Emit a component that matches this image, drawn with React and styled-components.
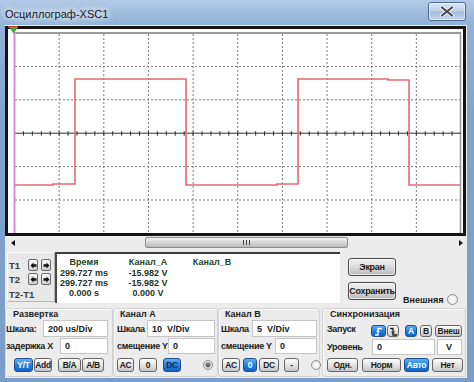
import React from 'react';
import styled, { createGlobalStyle } from 'styled-components';

const font = `'Liberation Sans', Arial, sans-serif`;

const GlobalStyle = createGlobalStyle`
  html, body { margin: 0; padding: 0; }
  body { width: 474px; height: 382px; overflow: hidden; font-family: ${font}; }
`;

const Window = styled.div`
  width: 474px;
  height: 382px;
  box-sizing: border-box;
  display: flex;
  flex-direction: column;
  background: linear-gradient(180deg, #b2cae6 0px, #93b3d9 22px, #7fa3cd 120px, #7a9ec9 100%);
`;

const TitleBar = styled.div`
  height: 25px;
  flex: none;
  display: flex;
  align-items: center;
  justify-content: space-between;
  padding: 0 8px 0 5px;
`;

const Title = styled.span`
  font: 11px ${font};
  color: #161616;
  margin-top: 2px;
  text-shadow: 0 0 5px #eef4fc, 0 0 9px #eef4fc, 0 0 12px #eef4fc;
`;

const CloseButton = styled.div`
  width: 38px;
  height: 19px;
  box-sizing: border-box;
  align-self: flex-start;
  margin-top: 2px;
  border: 1px solid #4f6d96;
  border-radius: 3px;
  background: linear-gradient(#dde7f3, #bdd0e7 45%, #a5bedd 52%, #c3d5ec);
  box-shadow: inset 0 0 0 1px rgba(255, 255, 255, 0.5);
  display: flex;
  align-items: center;
  justify-content: center;
`;

const Body = styled.div`
  flex: 1;
  margin: 0 7px 4px 5px;
  background: #ececec;
  display: flex;
  flex-direction: column;
  min-height: 0;
`;

const Scope = styled.div`
  position: relative;
  box-sizing: border-box;
  height: 210px;
  margin: 1px 1px 0 0;
  border: 3px solid #141414;
  background: #fff;
  padding: 3px 2px 0 6px;
  flex: none;
`;

const Marker = styled.svg`
  position: absolute;
  left: 0;
  top: -3px;
`;

const ScrollBar = styled.div`
  height: 11px;
  margin: 1px 1px 0 3px;
  display: flex;
  align-items: center;
  flex: none;
`;

const ScrollArrow = styled.div`
  width: ${p => p.$w}px;
  height: 11px;
  display: flex;
  align-items: center;
  justify-content: center;
`;

const Track = styled.div`
  flex: 1;
  height: 11px;
  display: flex;
  align-items: center;
`;

const Thumb = styled.div`
  box-sizing: border-box;
  height: 11px;
  border: 1px solid #8d8d8d;
  border-radius: 2px;
  background: linear-gradient(#f2f2f2, #d6d6d6 50%, #b9b9b9);
  display: flex;
  align-items: center;
  justify-content: center;
`;

const Readout = styled.div`
  height: 52px;
  margin-top: 3px;
  padding-left: 2px;
  display: flex;
  flex: none;
`;

const CursorPanel = styled.div`
  box-sizing: border-box;
  width: 48px;
  height: 50px;
  margin-top: 1px;
  padding: 6px 0 0 1px;
  background: #e8e8e8;
  border: 1px solid;
  border-color: #fdfdfd #b5b5b5 #b5b5b5 #fdfdfd;
  display: flex;
  flex-direction: column;
  gap: 2px;
`;

const CursorRow = styled.div`
  height: 12px;
  display: flex;
  align-items: center;
  margin-top: ${p => p.$mt || 0}px;
`;

const CursorLabel = styled.span`
  width: ${p => p.$w || 19}px;
  font: bold 9.5px ${font};
  color: #3a3a3a;
`;

const ArrowButton = styled.div`
  box-sizing: border-box;
  width: 10px;
  height: 12px;
  margin-right: 3px;
  border: 1px solid #6a6a6a;
  border-radius: 2px;
  background: linear-gradient(#fafafa, #cfcfcf);
  display: flex;
  align-items: center;
  justify-content: center;
`;

const ReadoutBox = styled.div`
  box-sizing: border-box;
  width: 285px;
  margin-top: 1px;
  padding-top: 1px;
  background: #fff;
  border-top: 2px solid #3d3d3d;
  border-left: 2px solid #4a4a4a;
  display: grid;
  grid-template-columns: 54px 74px 54px;
  grid-template-rows: 13px 10px 10px 10px;
  align-items: center;
  justify-items: center;
`;

const Cell = styled.span`
  font: bold 9px ${font};
  color: ${p => (p.$head ? '#24462b' : '#1f3324')};
  white-space: nowrap;
`;

const SideButtons = styled.div`
  margin-left: 8px;
  padding-top: 7px;
  display: flex;
  flex-direction: column;
  gap: 6px;
`;

const BigButton = styled.div`
  box-sizing: border-box;
  width: 48px;
  height: 18px;
  border: 1px solid #4c4c4c;
  border-radius: 3px;
  background: linear-gradient(#f4f4f4, #dcdcdc 45%, #bcbcbc);
  box-shadow: inset 0 0 0 1px rgba(255, 255, 255, 0.6);
  font: bold 9px ${font};
  letter-spacing: -0.3px;
  color: #1a1a1a;
  display: flex;
  align-items: center;
  justify-content: center;
  white-space: nowrap;
`;

const ExternalRow = styled.div`
  align-self: flex-end;
  margin: 0 0 -2px 7px;
  display: flex;
  align-items: center;
  gap: 4px;
  font: bold 9px ${font};
  color: #1a1a1a;
`;

const Radio = styled.span`
  box-sizing: border-box;
  width: ${p => p.$size || 10}px;
  height: ${p => p.$size || 10}px;
  border-radius: 50%;
  border: 1px solid #8e8e8e;
  flex: none;
  background: ${p =>
    p.$on
      ? 'radial-gradient(circle, #6e6e6e 0 2px, #bcbcbc 2.6px, #f4f4f4 4px)'
      : 'radial-gradient(circle, #fdfdfd 0, #e2e2e2 100%)'};
`;

const Controls = styled.div`
  flex: 1;
  display: flex;
  padding: 5px 1px 1px 0;
  min-height: 0;
`;

const Group = styled.div`
  box-sizing: border-box;
  width: ${p => p.$w}px;
  margin-left: ${p => p.$ml || 0}px;
  padding-right: ${p => p.$pr}px;
  border: 1px solid #d3d3d3;
  border-radius: 3px;
  box-shadow: inset 1px 1px 0 #fafafa;
  display: flex;
  flex-direction: column;
`;

const GroupTitle = styled.div`
  height: 11px;
  line-height: 11px;
  padding-left: ${p => p.$pl}px;
  font: bold 9px ${font};
  color: #1c1c1c;
`;

const Row = styled.div`
  height: ${p => p.$h}px;
  margin-top: ${p => p.$mt || 0}px;
  padding-left: ${p => p.$pl}px;
  display: flex;
  align-items: center;
`;

const Label = styled.span`
  font: bold 9px ${font};
  letter-spacing: -0.3px;
  color: #1a1a1a;
  white-space: nowrap;
  margin-right: auto;
`;

const Field = styled.div`
  box-sizing: border-box;
  width: ${p => p.$w}px;
  height: 100%;
  margin-left: ${p => p.$ml || 0}px;
  padding-left: ${p => p.$pl || 4}px;
  background: #fff;
  border: 1px solid #c6c6c6;
  font: bold 9px ${font};
  color: #1a1a1a;
  display: flex;
  align-items: center;
  white-space: pre;
`;

const Button = styled.div`
  box-sizing: border-box;
  flex: none;
  width: ${p => p.$w}px;
  height: ${p => p.$h || 14}px;
  margin-left: ${p => p.$ml || 0}px;
  border: 1px solid ${p => (p.$on ? '#1f4f8c' : '#666')};
  border-radius: 3px;
  background: ${p =>
    p.$on
      ? 'linear-gradient(#5fb0f5, #2581e0 50%, #1562c2)'
      : 'linear-gradient(#fdfdfd, #e4e4e4 50%, #c6c6c6)'};
  color: ${p => (p.$on ? (p.$dark ? '#0d2b66' : '#fff') : '#1e1e1e')};
  font: bold 8.5px ${font};
  letter-spacing: -0.3px;
  display: flex;
  align-items: center;
  justify-content: center;
  white-space: nowrap;
`;

const ButtonRow = styled.div`
  height: ${p => p.$h || 14}px;
  margin-top: ${p => p.$mt || 0}px;
  padding-left: ${p => p.$pl}px;
  display: flex;
  align-items: center;
`;

const GRID_W = 447;
const GRID_H = 201;
const DIV_X = 44.65;
const DIV_Y = 33.4;

function ScopeGrid() {
  const verticals = Array.from({ length: 9 }, (_, i) => 0.5 + (i + 1) * DIV_X);
  const horizontals = [1, 2, 4, 5].map(j => 1 + j * DIV_Y);
  const axisY = 1 + 3 * DIV_Y;
  const ticks = Array.from({ length: 49 }, (_, k) => 0.5 + (k + 1) * (DIV_X / 5));
  return (
    <svg width={GRID_W} height={GRID_H} style={{ display: 'block', overflow: 'visible' }}>
      {verticals.map(x => (
        <line key={x} x1={x} y1={2} x2={x} y2={GRID_H} stroke="#7b7b7b" strokeWidth="1" strokeDasharray="2 2" />
      ))}
      {horizontals.map(y => (
        <line key={y} x1={1} y1={y} x2={GRID_W} y2={y} stroke="#7b7b7b" strokeWidth="1" strokeDasharray="2 2" />
      ))}
      <line x1={0} y1={1} x2={GRID_W} y2={1} stroke="#9a9a9a" strokeWidth="2" />
      <line x1={GRID_W - 0.5} y1={0} x2={GRID_W - 0.5} y2={GRID_H} stroke="#9a9a9a" strokeWidth="1.5" />
      <line x1={0} y1={axisY} x2={GRID_W} y2={axisY} stroke="#2e2e2e" strokeWidth="1" />
      {ticks.map(x => (
        <line key={x} x1={x} y1={axisY - 2} x2={x} y2={axisY + 2.5} stroke="#2e2e2e" strokeWidth="1" />
      ))}
      <path
        d="M1 153 H39 V152 H61 V47 H172 V153 H263 V152 H284 V47 H374 V48 H395 V153 H446"
        fill="none"
        stroke="#e66874"
        strokeWidth="1.6"
      />
      <line x1={0.5} y1={0} x2={0.5} y2={GRID_H} stroke="#dc84e2" strokeWidth="2" />
    </svg>
  );
}

const LeftArrow = () => (
  <svg width="7" height="7" viewBox="0 0 7 7">
    <path d="M0.5 3.5 L3.5 0.5 V2.3 H6.5 V4.7 H3.5 V6.5 Z" fill="#111" />
  </svg>
);

const RightArrow = () => (
  <svg width="7" height="7" viewBox="0 0 7 7">
    <path d="M6.5 3.5 L3.5 0.5 V2.3 H0.5 V4.7 H3.5 V6.5 Z" fill="#111" />
  </svg>
);

const RiseEdge = ({ color }) => (
  <svg width="9" height="9" viewBox="0 0 9 9">
    <path d="M1 8 H4 V1.5 H8" fill="none" stroke={color} strokeWidth="1.3" />
    <path d="M2.5 5 L4 3 L5.5 5" fill="none" stroke={color} strokeWidth="1" />
  </svg>
);

const FallEdge = ({ color }) => (
  <svg width="9" height="9" viewBox="0 0 9 9">
    <path d="M1 1.5 H4 V8 H8" fill="none" stroke={color} strokeWidth="1.3" />
    <path d="M2.5 4.5 L4 6.5 L5.5 4.5" fill="none" stroke={color} strokeWidth="1" />
  </svg>
);

const readoutRows = [
  ['299.727 ms', '-15.982 V', ''],
  ['299.727 ms', '-15.982 V', ''],
  ['0.000 s', '0.000 V', ''],
];

export default function App() {
  return (
    <>
      <GlobalStyle />
      <Window>
        <TitleBar>
          <Title>Осциллограф-XSC1</Title>
          <CloseButton>
            <svg width="14" height="11" viewBox="0 0 14 11">
              <path d="M2 1.5 L12 9.5 M12 1.5 L2 9.5" stroke="#f4f7fb" strokeWidth="4" strokeLinecap="round" />
              <path d="M2 1.5 L12 9.5 M12 1.5 L2 9.5" stroke="#454b55" strokeWidth="2.2" strokeLinecap="round" />
            </svg>
          </CloseButton>
        </TitleBar>
        <Body>
          <Scope>
            <Marker width="11" height="8" viewBox="0 0 11 8">
              <rect x="0" y="0" width="10" height="1.5" fill="#d23a2a" />
              <path d="M1 1 H10 L5.5 7.5 Z" fill="#43a83c" />
            </Marker>
            <ScopeGrid />
          </Scope>

          <ScrollBar>
            <ScrollArrow $w={10}>
              <svg width="4" height="6" viewBox="0 0 4 6">
                <path d="M0 3 L4 0 V6 Z" fill="#111" />
              </svg>
            </ScrollArrow>
            <Track>
              <Thumb style={{ marginLeft: 127, width: 203 }}>
                <svg width="7" height="5" viewBox="0 0 7 5">
                  <path d="M0.5 0 V5 M3.5 0 V5 M6.5 0 V5" stroke="#444" strokeWidth="1" />
                </svg>
              </Thumb>
            </Track>
            <ScrollArrow $w={11}>
              <svg width="4" height="6" viewBox="0 0 4 6">
                <path d="M4 3 L0 0 V6 Z" fill="#111" />
              </svg>
            </ScrollArrow>
          </ScrollBar>

          <Readout>
            <CursorPanel>
              <CursorRow>
                <CursorLabel>T1</CursorLabel>
                <ArrowButton><LeftArrow /></ArrowButton>
                <ArrowButton><RightArrow /></ArrowButton>
              </CursorRow>
              <CursorRow>
                <CursorLabel>T2</CursorLabel>
                <ArrowButton><LeftArrow /></ArrowButton>
                <ArrowButton><RightArrow /></ArrowButton>
              </CursorRow>
              <CursorRow $mt={1}>
                <CursorLabel $w={40}>T2-T1</CursorLabel>
              </CursorRow>
            </CursorPanel>
            <ReadoutBox>
              <Cell $head>Время</Cell>
              <Cell $head>Канал_A</Cell>
              <Cell $head>Канал_B</Cell>
              {readoutRows.map((row, i) =>
                row.map((v, j) => <Cell key={`${i}-${j}`}>{v}</Cell>)
              )}
            </ReadoutBox>
            <SideButtons>
              <BigButton>Экран</BigButton>
              <BigButton>Сохранить</BigButton>
            </SideButtons>
            <ExternalRow>
              Внешняя
              <Radio $size={11} />
            </ExternalRow>
          </Readout>

          <Controls>
            <Group $w={108} $pr={4}>
              <GroupTitle $pl={7}>Развертка</GroupTitle>
              <Row $h={17} $pl={0}>
                <Label>Шкала:</Label>
                <Field $w={65}>200 us/Div</Field>
              </Row>
              <Row $h={16} $mt={1} $pl={0}>
                <Label>задержка X</Label>
                <Field $w={48}>0</Field>
              </Row>
              <ButtonRow $mt={4} $pl={8}>
                <Button $w={19} $on>Y/T</Button>
                <Button $w={18} $ml={1}>Add</Button>
                <Button $w={23} $ml={6}>B/A</Button>
                <Button $w={22} $ml={1}>A/B</Button>
              </ButtonRow>
            </Group>

            <Group $w={105} $pr={2}>
              <GroupTitle $pl={6}>Канал A</GroupTitle>
              <Row $h={17} $pl={3}>
                <Label>Шкала</Label>
                <Field $w={68}>10  V/Div</Field>
              </Row>
              <Row $h={16} $mt={1} $pl={3}>
                <Label>смещение Y</Label>
                <Field $w={47}>0</Field>
              </Row>
              <ButtonRow $mt={4} $pl={3}>
                <Button $w={17}>AC</Button>
                <Button $w={18} $ml={5}>0</Button>
                <Button $w={18} $ml={6} $on $dark>DC</Button>
                <Radio style={{ marginLeft: 22 }} $on />
              </ButtonRow>
            </Group>

            <Group $w={102} $pr={2}>
              <GroupTitle $pl={6}>Канал B</GroupTitle>
              <Row $h={17} $pl={2}>
                <Label>Шкала</Label>
                <Field $w={65}>5  V/Div</Field>
              </Row>
              <Row $h={16} $mt={1} $pl={2}>
                <Label>смещение Y</Label>
                <Field $w={42}>0</Field>
              </Row>
              <ButtonRow $mt={4} $pl={3}>
                <Button $w={18}>AC</Button>
                <Button $w={14} $ml={3} $on>0</Button>
                <Button $w={20} $ml={2}>DC</Button>
                <Button $w={15} $ml={5}>-</Button>
                <Radio style={{ marginLeft: 12 }} />
              </ButtonRow>
            </Group>

            <Group $w={144} $ml={2} $pr={3}>
              <GroupTitle $pl={7}>Синхронизация</GroupTitle>
              <Row $h={17} $pl={4}>
                <Label>Запуск</Label>
                <Button $w={15} $h={12} $on style={{ alignSelf: 'flex-end' }}>
                  <RiseEdge color="#fff" />
                </Button>
                <Button $w={12} $h={12} $ml={1} style={{ alignSelf: 'flex-end' }}>
                  <FallEdge color="#222" />
                </Button>
                <Button $w={12} $h={12} $ml={6} $on style={{ alignSelf: 'flex-end' }}>A</Button>
                <Button $w={12} $h={12} $ml={3} style={{ alignSelf: 'flex-end' }}>B</Button>
                <Button $w={27} $h={12} $ml={3} style={{ alignSelf: 'flex-end' }}>Внеш</Button>
              </Row>
              <Row $h={16} $mt={2} $pl={4}>
                <Label>Уровень</Label>
                <Field $w={63}>0</Field>
                <Field $w={25} $ml={2} $pl={8}>V</Field>
              </Row>
              <ButtonRow $mt={3} $pl={4}>
                <Button $w={31}>Одн.</Button>
                <Button $w={39} $ml={4}>Норм</Button>
                <Button $w={25} $ml={3} $on>Авто</Button>
                <Button $w={31} $ml={3}>Нет</Button>
              </ButtonRow>
            </Group>
          </Controls>
        </Body>
      </Window>
    </>
  );
}
